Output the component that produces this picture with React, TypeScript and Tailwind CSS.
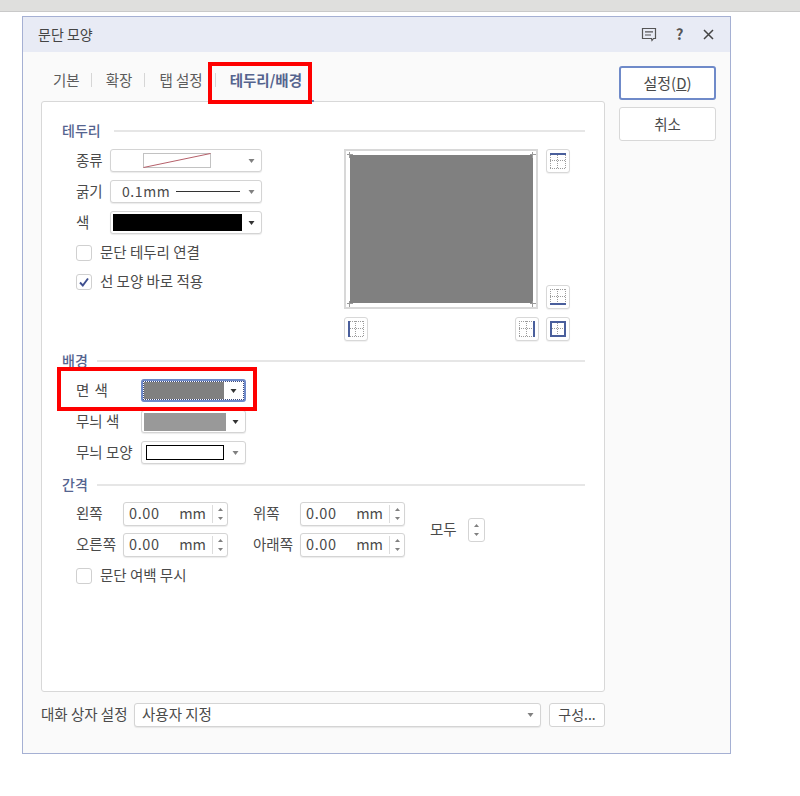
import type { ReactNode } from 'react'

function Arrow({ dark = false }: { dark?: boolean }) {
  return (
    <svg width="7" height="4" viewBox="0 0 7 4" className="shrink-0">
      <path d="M0.5 0 H6.5 L3.5 4 Z" fill={dark ? '#333333' : '#808080'} />
    </svg>
  )
}

function Combo({ className, children, dark }: { className: string; children?: ReactNode; dark?: boolean }) {
  return (
    <div className={`flex items-center h-[23px] bg-white border border-[#d4d4d4] rounded-[3px] shadow-[0_1px_1px_rgba(0,0,0,0.08)] ${className}`}>
      <div className="flex-1 min-w-0 h-full flex items-center">{children}</div>
      <div className="w-[19px] flex justify-center">
        <Arrow dark={dark} />
      </div>
    </div>
  )
}

function Label({ className, children }: { className: string; children: ReactNode }) {
  return <div className={`text-[14.5px] leading-[20px] pb-[2px] text-[#4a4a4a] whitespace-pre ${className}`}>{children}</div>
}

function Heading({ label, lineClass }: { label: string; lineClass: string }) {
  return (
    <div className="flex items-center h-[20px] w-[523px]">
      <span className="text-[14px] leading-[20px] pb-[2px] font-medium text-[#55648f] whitespace-pre">{label}</span>
      <div className={`h-[2px] bg-[#e6e6e6] flex-1 ${lineClass}`} />
    </div>
  )
}

function Check({ label, checked }: { label: string; checked?: boolean }) {
  return (
    <div className="flex items-center h-[16px]">
      <div className="w-[16px] h-[16px] bg-white border border-[#d0d0d0] rounded-[3px] flex items-center justify-center">
        {checked && (
          <svg width="12" height="12" viewBox="0 0 12 12">
            <path d="M2 6.5 L4.8 9.5 L10 2.5" fill="none" stroke="#3f4f8f" strokeWidth="1.9" />
          </svg>
        )}
      </div>
      <span className="ml-[8px] text-[14.5px] leading-[20px] pb-[2px] text-[#4a4a4a] whitespace-pre">{label}</span>
    </div>
  )
}

function Spin({ className }: { className: string }) {
  return (
    <div className={`flex flex-col items-center justify-center gap-[6px] ${className}`}>
      <svg width="5" height="3" viewBox="0 0 5 3"><path d="M0 3 H5 L2.5 0 Z" fill="#808080" /></svg>
      <svg width="5" height="3" viewBox="0 0 5 3"><path d="M0 0 H5 L2.5 3 Z" fill="#808080" /></svg>
    </div>
  )
}

function Spinner() {
  return (
    <div className="flex items-center w-[105px] h-[24px] bg-white border border-[#d4d4d4] rounded-[3px] shadow-[0_1px_1px_rgba(0,0,0,0.08)]">
      <span className="ml-[5px] w-[44px] text-[14.5px] leading-[20px] pb-[2px] text-[#4a4a4a] tracking-[0.6px]">0.00</span>
      <span className="w-[33px] text-right text-[14.5px] leading-[20px] pb-[2px] text-[#4a4a4a]">mm</span>
      <div className="ml-[6px] h-[18px] w-px bg-[#dcdcdc]" />
      <Spin className="flex-1" />
    </div>
  )
}

type Side = 'top' | 'bottom' | 'left' | 'right' | 'all'

function EdgeButton({ side }: { side: Side }) {
  const blue = '#4a5f9c'
  return (
    <div className="w-[24px] h-[24px] bg-white border border-[#d8d8d8] rounded-[3px] flex items-center justify-center shadow-[0_1px_1px_rgba(0,0,0,0.06)]">
      <svg width="16" height="16" viewBox="0 0 16 16">
        <path
          d="M0 0.5 H16 M0 15.5 H16 M0.5 0 V16 M15.5 0 V16 M7.5 0 V16 M0 7.5 H16"
          fill="none"
          stroke="#9c9c9c"
          strokeWidth="1"
          strokeDasharray="1 1"
        />
        {(side === 'top' || side === 'all') && <rect x="0" y="0" width="16" height="2" fill={blue} />}
        {(side === 'bottom' || side === 'all') && <rect x="0" y="14" width="16" height="2" fill={blue} />}
        {(side === 'left' || side === 'all') && <rect x="0" y="0" width="2" height="16" fill={blue} />}
        {(side === 'right' || side === 'all') && <rect x="14" y="0" width="2" height="16" fill={blue} />}
      </svg>
    </div>
  )
}

function Corner({ className }: { className: string }) {
  return (
    <svg width="6" height="6" viewBox="0 0 6 6" className={`absolute ${className}`}>
      <path d="M2.5 0 V6 M0 2.5 H6" fill="none" stroke="#9a9a9a" strokeWidth="1" />
    </svg>
  )
}

export default function App() {
  return (
    <div
      className="relative w-[800px] h-[796px] bg-white overflow-hidden"
      style={{ fontFamily: '"Noto Sans CJK KR", "Noto Sans", sans-serif' }}
    >
      <div className="h-[12px] bg-[#dfdfdd] border-b border-[#c9c9c9]" />

      <div className="ml-[22px] mt-[4px] w-[709px] h-[738px] border border-[#a5b0d3] bg-[#fafafa] flex flex-col">
        <div className="h-[35px] shrink-0 bg-[#e8ebf5] flex items-center pl-[15px] pr-[16px]">
          <span className="text-[14px] leading-[20px] pb-[2px] text-[#444444]">문단 모양</span>
          <div className="ml-auto flex items-center">
            <svg width="16" height="15" viewBox="0 0 16 15">
              <path d="M1.5 1.5 H14.5 V11.5 H12.5 L11 13.5 L10.5 11.5 H1.5 Z" fill="none" stroke="#555555" strokeWidth="1.2" />
              <path d="M4 4.8 H12 M4 8 H10" stroke="#555555" strokeWidth="1.2" />
            </svg>
            <span className="ml-[16px] w-[13px] text-center text-[15px] font-bold text-[#555555]">?</span>
            <svg width="11" height="11" viewBox="0 0 11 11" className="ml-[17px]">
              <path d="M1 1 L10 10 M10 1 L1 10" stroke="#444444" strokeWidth="1.5" />
            </svg>
          </div>
        </div>

        <div className="flex flex-1 pl-[18px]">
          <div className="w-[564px] flex flex-col">
            <div className="flex items-center h-[49px] pt-[6px] text-[14.5px] text-[#5c5c5c]">
              <span className="ml-[12px]">기본</span>
              <div className="ml-[11px] h-[14px] w-px bg-[#d6d6d6]" />
              <span className="ml-[14px]">확장</span>
              <div className="ml-[12px] h-[14px] w-px bg-[#d6d6d6]" />
              <span className="ml-[14px]">탭 설정</span>
              <div className="ml-[12px] h-[14px] w-px bg-[#d6d6d6]" />
              <span className="ml-[14px] font-bold text-[#55648f]">테두리/배경</span>
            </div>

            <div className="h-[591px] bg-white border border-[#d8d8d8] rounded-[3px] pt-[19px] pl-[20px]">
              <Heading label="테두리" lineClass="ml-[13px]" />

              <div className="flex mt-[8px] ml-[14px]">
                <div className="w-[268px] flex flex-col">
                  <div className="flex items-center h-[23px]">
                    <Label className="w-[34px]">종류</Label>
                    <Combo className="w-[152px]">
                      <svg width="68" height="15" viewBox="0 0 68 15" className="ml-[32px]">
                        <rect x="0.5" y="0.5" width="67" height="14" fill="none" stroke="#c2c2c2" />
                        <path d="M0.5 14.5 L67.5 0.5" stroke="#b5606a" strokeWidth="1" />
                      </svg>
                    </Combo>
                  </div>
                  <div className="flex items-center h-[23px] mt-[8px]">
                    <Label className="w-[34px]">굵기</Label>
                    <Combo className="w-[152px]">
                      <span className="ml-[11px] text-[14px] leading-[20px] pb-[1px] tracking-[0.6px] text-[#4a4a4a]">0.1mm</span>
                      <div className="ml-[6px] w-[64px] h-px bg-[#333333]" />
                    </Combo>
                  </div>
                  <div className="flex items-center h-[23px] mt-[8px]">
                    <Label className="w-[34px]">색</Label>
                    <Combo className="w-[152px]" dark>
                      <div className="ml-[2px] w-[130px] h-[17px] bg-black" />
                    </Combo>
                  </div>
                  <div className="mt-[11px]">
                    <Check label="문단 테두리 연결" />
                  </div>
                  <div className="mt-[13px]">
                    <Check label="선 모양 바로 적용" checked />
                  </div>
                </div>

                <div className="flex flex-col">
                  <div className="flex">
                    <div className="relative w-[194px] h-[160px] bg-white border-2 border-[#d8d8d8] pt-[4px] pl-[4px]">
                      <div className="w-[183px] h-[148px] bg-[#808080]" />
                      <Corner className="left-[1px] top-[1px]" />
                      <Corner className="right-[0px] top-[1px]" />
                      <Corner className="left-[1px] bottom-[0px]" />
                      <Corner className="right-[0px] bottom-[0px]" />
                    </div>
                    <div className="ml-[8px] flex flex-col justify-between">
                      <EdgeButton side="top" />
                      <EdgeButton side="bottom" />
                    </div>
                  </div>
                  <div className="flex mt-[8px] w-[226px]">
                    <EdgeButton side="left" />
                    <div className="ml-auto">
                      <EdgeButton side="right" />
                    </div>
                    <div className="ml-[7px]">
                      <EdgeButton side="all" />
                    </div>
                  </div>
                </div>
              </div>

              <div className="mt-[10px]">
                <Heading label="배경" lineClass="ml-[9px]" />
              </div>
              <div className="ml-[14px] mt-[8px] flex flex-col gap-[8px]">
                <div className="flex items-center h-[23px]">
                  <Label className="w-[65px] tracking-[1px]">면 색</Label>
                  <div className="flex items-center w-[105px] h-[23px] bg-white border-2 border-[#6f8ac9] rounded-[3px]">
                    <div className="w-full h-full border border-dotted border-[#3a4a80] flex items-center">
                      <div className="w-[80px] h-full bg-[#808080]" />
                      <div className="flex-1 flex justify-center">
                        <Arrow dark />
                      </div>
                    </div>
                  </div>
                </div>
                <div className="flex items-center h-[23px]">
                  <Label className="w-[65px]">무늬 색</Label>
                  <Combo className="w-[105px]" dark>
                    <div className="ml-[2px] w-[83px] h-[18px] bg-[#999999]" />
                  </Combo>
                </div>
                <div className="flex items-center h-[23px]">
                  <Label className="w-[65px]">무늬 모양</Label>
                  <Combo className="w-[105px]">
                    <div className="ml-[4px] w-[78px] h-[15px] bg-white border border-black" />
                  </Combo>
                </div>
              </div>

              <div className="mt-[11px]">
                <Heading label="간격" lineClass="ml-[9px]" />
              </div>
              <div className="ml-[14px] mt-[7px] flex items-center">
                <div className="w-[177px] flex flex-col gap-[7px]">
                  <div className="flex items-center">
                    <Label className="w-[47px]">왼쪽</Label>
                    <Spinner />
                  </div>
                  <div className="flex items-center">
                    <Label className="w-[47px]">오른쪽</Label>
                    <Spinner />
                  </div>
                </div>
                <div className="w-[177px] flex flex-col gap-[7px]">
                  <div className="flex items-center">
                    <Label className="w-[47px]">위쪽</Label>
                    <Spinner />
                  </div>
                  <div className="flex items-center">
                    <Label className="w-[47px]">아래쪽</Label>
                    <Spinner />
                  </div>
                </div>
                <Label className="w-[38px]">모두</Label>
                <div className="w-[17px] h-[24px] bg-white border border-[#d4d4d4] rounded-[3px] flex">
                  <Spin className="flex-1" />
                </div>
              </div>
              <div className="ml-[14px] mt-[11px]">
                <Check label="문단 여백 무시" />
              </div>
            </div>

            <div className="flex items-center mt-[11px] h-[24px]">
              <span className="w-[93px] text-[14.5px] leading-[20px] pb-[2px] text-[#4a4a4a] whitespace-pre">대화 상자 설정</span>
              <Combo className="w-[407px] !h-[24px]">
                <span className="ml-[7px] text-[14.5px] leading-[20px] pb-[2px] text-[#4a4a4a]">사용자 지정</span>
              </Combo>
              <div className="ml-[8px] w-[56px] h-[24px] bg-white border border-[#d4d4d4] rounded-[3px] flex items-center justify-center text-[14px] leading-[20px] pb-[2px] text-[#4a4a4a]">
                구성...
              </div>
            </div>
          </div>

          <div className="ml-[14px] pt-[14px] flex flex-col gap-[7px]">
            <div className="w-[97px] h-[34px] bg-white border-2 border-[#6f8ac9] rounded-[3px] flex items-center justify-center text-[15px] leading-[20px] text-[#4a4a4a]">
              <span>설정(<span className="underline">D</span>)</span>
            </div>
            <div className="w-[97px] h-[34px] bg-white border border-[#d8d8d8] rounded-[3px] flex items-center justify-center text-[14.5px] leading-[20px] text-[#4a4a4a]">
              취소
            </div>
          </div>
        </div>
      </div>

      {/* active tab underline, then the red callouts over the dialog */}
      <div className="absolute left-[209px] top-[100px] w-[105px] h-[2px] bg-[#6f7fb0]" />
      <div className="absolute left-[208px] top-[62px] w-[104px] h-[42px] border-[4px] border-[#fe0000]" />
      <div className="absolute left-[57px] top-[367px] w-[200px] h-[44px] border-[4px] border-[#fe0000]" />
    </div>
  )
}
